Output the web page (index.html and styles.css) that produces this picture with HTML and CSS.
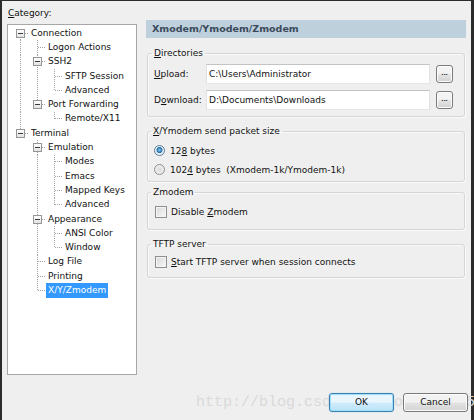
FILE: index.html
```html
<!DOCTYPE html>
<html>
<head>
<meta charset="utf-8">
<link rel="stylesheet" href="styles.css">
</head>
<body>
<div class="window">
  <div class="main">
    <div class="left">
      <div class="cat-label"><u>C</u>ategory:</div>
      <div class="tree">
        <div class="row"><span class="g f"><span class="x"></span></span><span class="lbl">Connection</span></div>
        <div class="row"><span class="g v"></span><span class="g t"></span><span class="lbl">Logon Actions</span></div>
        <div class="row"><span class="g v"></span><span class="g t"><span class="x"></span></span><span class="lbl">SSH2</span></div>
        <div class="row"><span class="g v"></span><span class="g v"></span><span class="g t"></span><span class="lbl">SFTP Session</span></div>
        <div class="row"><span class="g v"></span><span class="g v"></span><span class="g l"></span><span class="lbl">Advanced</span></div>
        <div class="row"><span class="g v"></span><span class="g l"><span class="x"></span></span><span class="lbl">Port Forwarding</span></div>
        <div class="row"><span class="g v"></span><span class="g"></span><span class="g l"></span><span class="lbl">Remote/X11</span></div>
        <div class="row"><span class="g l"><span class="x"></span></span><span class="lbl">Terminal</span></div>
        <div class="row"><span class="g"></span><span class="g t"><span class="x"></span></span><span class="lbl">Emulation</span></div>
        <div class="row"><span class="g"></span><span class="g v"></span><span class="g t"></span><span class="lbl">Modes</span></div>
        <div class="row"><span class="g"></span><span class="g v"></span><span class="g t"></span><span class="lbl">Emacs</span></div>
        <div class="row"><span class="g"></span><span class="g v"></span><span class="g t"></span><span class="lbl">Mapped Keys</span></div>
        <div class="row"><span class="g"></span><span class="g v"></span><span class="g l"></span><span class="lbl">Advanced</span></div>
        <div class="row"><span class="g"></span><span class="g t"><span class="x"></span></span><span class="lbl">Appearance</span></div>
        <div class="row"><span class="g"></span><span class="g v"></span><span class="g t"></span><span class="lbl">ANSI Color</span></div>
        <div class="row"><span class="g"></span><span class="g v"></span><span class="g l"></span><span class="lbl">Window</span></div>
        <div class="row"><span class="g"></span><span class="g t"></span><span class="lbl">Log File</span></div>
        <div class="row"><span class="g"></span><span class="g t"></span><span class="lbl">Printing</span></div>
        <div class="row sel"><span class="g"></span><span class="g l"></span><span class="lbl">X/Y/Zmodem</span></div>
      </div>
    </div>
    <div class="right">
      <div class="header">Xmodem/Ymodem/Zmodem</div>
      <fieldset class="group dirs">
        <legend><u>D</u>irectories</legend>
        <div class="path-row">
          <span class="path-label"><u>U</u>pload:</span>
          <span class="input">C:\Users\Administrator</span>
          <span class="browse">...</span>
        </div>
        <div class="path-row second">
          <span class="path-label">D<u>o</u>wnload:</span>
          <span class="input">D:\Documents\Downloads</span>
          <span class="browse">...</span>
        </div>
      </fieldset>
      <fieldset class="group opts packet">
        <legend><u>X</u>/Ymodem send packet size</legend>
        <div class="opt"><span class="radio on"></span><span>12<u>8</u> bytes</span></div>
        <div class="opt"><span class="radio"></span><span>102<u>4</u> bytes&nbsp; (Xmodem-1k/Ymodem-1k)</span></div>
      </fieldset>
      <fieldset class="group opts zmodem">
        <legend>Zmodem</legend>
        <div class="opt"><span class="check"></span><span>Disable <u>Z</u>modem</span></div>
      </fieldset>
      <fieldset class="group opts tftp">
        <legend>TFTP server</legend>
        <div class="opt"><span class="check"></span><span><u>S</u>tart TFTP server when session connects</span></div>
      </fieldset>
    </div>
  </div>
  <div class="footer">
    <span class="watermark">http://blog.csdn.net/dou_ji2015</span>
    <span class="btn ok">OK</span>
    <span class="btn">Cancel</span>
  </div>
</div>
</body>
</html>
```
FILE: styles.css
```css
body {
  margin: 0;
  background: #2b2b2b;
  font-family: "DejaVu Sans", sans-serif;
  font-size: 9px;
  color: #111;
}
u { text-decoration-thickness: 1px; text-underline-offset: 1px; }

.window {
  margin: 1px 3px 0 2px;
  height: 419px;
  box-sizing: border-box;
  background: #efefef;
  padding: 5px 3px 0 5px;
  display: flex;
  flex-direction: column;
}
.main { display: flex; }
.left { width: 130px; flex: none; }
.cat-label { padding-left: 1px; height: 14px; line-height: 14px; }

.tree {
  margin-top: 4px;
  height: 351px;
  box-sizing: border-box;
  border: 1px solid #a7a7a7;
  background: #fff;
  padding: 1px 0 0 4px;
}
.row { display: flex; height: 14.3px; }
.g {
  width: 17px;
  flex: none;
  display: flex;
  align-items: center;
  justify-content: center;
  --dv: repeating-linear-gradient(to bottom, #a3a3a3 0 1px, transparent 1px 2px);
  --dh: repeating-linear-gradient(to right, #a3a3a3 0 1px, transparent 1px 2px);
}
.v { background: var(--dv) 8px 0 / 1px 100% no-repeat; }
.t { background: var(--dh) 9px 50% / 8px 1px no-repeat, var(--dv) 8px 0 / 1px 100% no-repeat; }
.l { background: var(--dh) 9px 50% / 8px 1px no-repeat, var(--dv) 8px 0 / 1px 50% no-repeat; }
.f { background: var(--dh) 9px 50% / 8px 1px no-repeat, var(--dv) 8px 100% / 1px 50% no-repeat; }
.x {
  width: 9px;
  height: 9px;
  box-sizing: border-box;
  border: 1px solid #969696;
  background: linear-gradient(#ffffff, #e2e2e2);
  display: flex;
  align-items: center;
  justify-content: center;
}
.x::before { content: ""; width: 5px; height: 1px; background: #3a3a3a; }
.lbl { padding: 0 2px; line-height: 15px; height: 15px; align-self: center; white-space: nowrap; }
.sel .lbl { background: #3399ff; color: #fff; }

.right { flex: 1; margin: 0 2px 0 9px; padding-top: 14px; }
.header {
  height: 18px;
  line-height: 18px;
  background: #bfd0dd;
  color: #3a4a5b;
  font-weight: bold;
  font-size: 9.5px;
  padding-left: 6px;
}
.group {
  margin: 8px 1px 0;
  padding: 3px 11px 2px 5px;
  border: 1px solid #d6d6d6;
  border-radius: 3px;
  box-shadow: inset 1px 1px #fafafa, 1px 1px #fafafa;
  min-width: 0;
}
.group legend { padding: 0 2px; margin-left: -2px; line-height: 14px; }
.dirs { padding: 4px 11px 6px 6px; }
.packet { margin-top: 7px; }
.zmodem { margin-top: 3px; padding-bottom: 8px; }
.tftp { margin-top: 7px; padding-top: 1px; padding-bottom: 6px; }

.path-row { display: flex; align-items: center; height: 20px; }
.path-row.second { margin-top: 6px; }
.path-label { width: 52px; flex: none; }
.input {
  flex: 1;
  height: 20px;
  box-sizing: border-box;
  border: 1px solid;
  border-color: #c2c4c8 #dfe1e5 #e5e7ea #dfe1e5;
  background: #fff;
  padding-left: 2px;
  line-height: 18px;
  white-space: nowrap;
}
.browse {
  width: 17px;
  height: 18px;
  margin-left: 6px;
  box-sizing: border-box;
  border: 1px solid #7b7b7b;
  border-radius: 3px;
  background: linear-gradient(#f3f3f3 0 45%, #e3e3e3 55%, #d2d2d2);
  box-shadow: inset 0 0 0 1px #fbfbfb;
  font-family: "Liberation Sans", sans-serif;
  font-size: 8px;
  font-weight: bold;
  line-height: 14px;
  text-align: center;
  color: #333;
}

.opt { display: flex; align-items: center; height: 19px; white-space: nowrap; }
.radio {
  width: 11px;
  height: 11px;
  box-sizing: border-box;
  border-radius: 50%;
  border: 1px solid #8f9090;
  background: radial-gradient(circle at 50% 50%, #dcdcdc, #f5f5f5);
  margin: 0 5px 0 1px;
  flex: none;
}
.radio.on {
  border-color: #5a7c98;
  background: radial-gradient(circle at 50% 45%, #8fd1f6 0, #1d6ea8 2.6px, #e9eef2 3.4px, #f4f6f8 100%);
}
.check {
  width: 12px;
  height: 12px;
  box-sizing: border-box;
  border: 1px solid #8e8f8f;
  background: linear-gradient(135deg, #d8d8d8, #f9f9f9);
  box-shadow: inset 0 0 0 1px #f4f4f4;
  margin: 0 4px 0 2px;
  flex: none;
}

.footer {
  display: flex;
  justify-content: flex-end;
  gap: 9px;
  margin-top: 18px;
  position: relative;
}
.watermark {
  position: absolute;
  left: 189px;
  top: 0;
  font-family: "Liberation Mono", monospace;
  font-size: 15px;
  line-height: 19px;
  color: #d9d9d9;
  white-space: nowrap;
}
.btn {
  position: relative;
  width: 65px;
  height: 19px;
  box-sizing: border-box;
  border: 1px solid #7a7a7a;
  border-radius: 3px;
  background: linear-gradient(#f2f2f2 0 48%, #e3e3e3 52%, #d3d3d3);
  box-shadow: inset 0 0 0 1px #fbfbfb;
  text-align: center;
  line-height: 17px;
  color: #111;
}
.btn.ok {
  border-color: #3c7fb1;
  background: linear-gradient(#eaf6fd 0 48%, #d0ecfb 52%, #b9e2f8);
  box-shadow: inset 0 0 0 1px #9ee0fb, 0 0 1px #5bc8f0;
}
```
